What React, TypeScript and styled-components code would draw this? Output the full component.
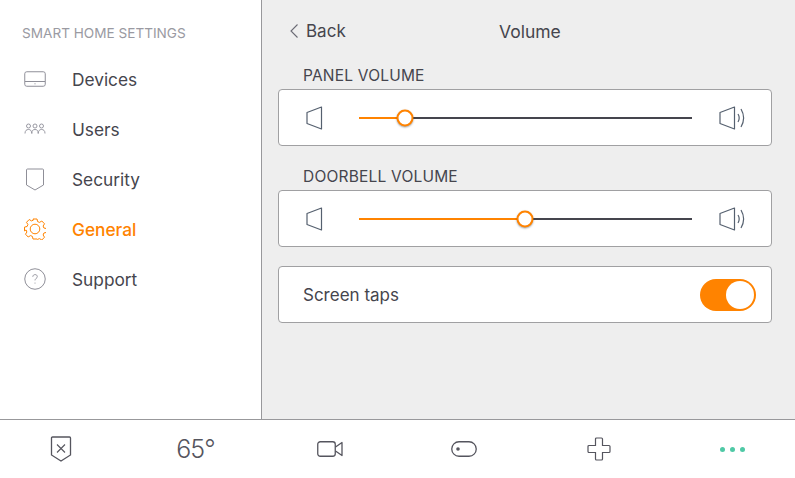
import * as React from "react";
import styled, { createGlobalStyle } from "styled-components";

const orange = "#ff8300";
const ink = "#45454d";
const iconGray = "#8f8f98";

const GlobalStyle = createGlobalStyle`
  html, body {
    margin: 0;
    padding: 0;
    background: #fff;
  }
  body {
    font-family: "Inter", "Liberation Sans", sans-serif;
    color: ${ink};
  }
`;

const navItems = [
  { label: "Devices", icon: "devices" },
  { label: "Users", icon: "users" },
  { label: "Security", icon: "security" },
  { label: "General", icon: "general", active: true },
  { label: "Support", icon: "support" },
];

const NavIcon: React.FC<{ name: string }> = ({ name }) => {
  switch (name) {
    case "devices":
      return (
        <svg width="22" height="16" viewBox="0 0 22 16" fill="none" stroke="currentColor">
          <rect x="0.75" y="0.75" width="20.5" height="14.5" rx="2" />
          <path d="M1 10.5h20" />
          <path d="M10.5 12.8h1" />
        </svg>
      );
    case "users":
      return (
        <svg width="22" height="12" viewBox="0 0 22 12" fill="none" stroke="currentColor" strokeWidth="0.9">
          <circle cx="4.5" cy="3" r="2" />
          <circle cx="11" cy="3" r="2" />
          <circle cx="17.5" cy="3" r="2" />
          <path d="M1 10.5c0-3 1.5-4 3.5-4s3 1 3.3 4M7.8 10.5c0-3 1.2-4 3.2-4s3.2 1 3.2 4M14.2 10.5c.3-3 1.3-4 3.3-4s3.5 1 3.5 4" />
        </svg>
      );
    case "security":
      return (
        <svg width="18" height="23" viewBox="0 0 18 23" fill="none" stroke="currentColor">
          <path d="M1.5 1h15a1 1 0 0 1 1 1v15l-8.500 5-8.500-5V2a1 1 0 0 1 1-1z" />
        </svg>
      );
    case "general":
      return (
        <svg width="22" height="22" viewBox="0 0 22 22" fill="none" stroke="currentColor">
          <circle cx="11" cy="11" r="4.800" />
          <path d="M9 1h4l.6 2.600 1.900.8 2.300-1.400 2.700 2.800-1.400 2.200.8 2 2.600.6v3.800l-2.600.6-.8 2 1.400 2.200-2.700 2.800-2.300-1.400-1.900.8L13 21H9l-.6-2.600-1.900-.8-2.300 1.400-2.700-2.800 1.400-2.200-.8-2L.5 12.900V9.100l2.600-.6.8-2-1.400-2.200L5.200 1.500l2.300 1.400 1.900-.8z" strokeLinejoin="round" />
        </svg>
      );
    default:
      return (
        <svg width="22" height="22" viewBox="0 0 22 22" fill="none" stroke="currentColor">
          <circle cx="11" cy="11" r="10.250" />
          <path d="M8.800 8.800c0-1.400 1-2.200 2.300-2.200s2.200.8 2.200 2c0 1.800-2.300 1.800-2.300 3.800" strokeWidth="0.9" />
          <path d="M11 14.600v1" strokeWidth="0.9" />
        </svg>
      );
  }
};

const SpeakerLow = () => (
  <svg width="17" height="24" viewBox="0 0 17 24" fill="none" stroke="currentColor" strokeWidth="1.2">
    <path d="M1 6.500L15.500 1v22L1 17.500z" strokeLinejoin="round" />
  </svg>
);

const SpeakerHigh = () => (
  <svg width="27" height="24" viewBox="0 0 27 24" fill="none" stroke="currentColor" strokeWidth="1.2">
    <path d="M1 6.500L15.500 1v22L1 17.500z" strokeLinejoin="round" />
    <path d="M19 8c1.500 2.500 1.500 5.500 0 8" />
    <path d="M22 3c3.500 6 3.500 12 0 18" />
  </svg>
);

const VolumeCard: React.FC<{ value: number }> = ({ value }) => (
  <Card>
    <SpeakerSlot>
      <SpeakerLow />
    </SpeakerSlot>
    <Track>
      <Fill style={{ width: `${value}%` }} />
      <Thumb style={{ left: `${value}%` }} />
    </Track>
    <SpeakerSlotEnd>
      <SpeakerHigh />
    </SpeakerSlotEnd>
  </Card>
);

const App: React.FC = () => {
  return (
    <>
      <GlobalStyle />
      <Screen>
        <Body>
          <Sidebar>
            <SectionTitle>SMART HOME SETTINGS</SectionTitle>
            <NavList>
              {navItems.map((item) => (
                <NavRow key={item.label} $active={item.active}>
                  <NavIconSlot>
                    <NavIcon name={item.icon} />
                  </NavIconSlot>
                  {item.label}
                </NavRow>
              ))}
            </NavList>
          </Sidebar>
          <Main>
            <TopRow>
              <BackLink>
                <svg width="10" height="16" viewBox="0 0 10 16" fill="none" stroke="#6a6a74" strokeWidth="1.100">
                  <path d="M8.500 1.500L2 8l6.500 6.500" />
                </svg>
                Back
              </BackLink>
              <PageTitle>Volume</PageTitle>
            </TopRow>
            <Groups>
              <div>
                <GroupLabel>PANEL VOLUME</GroupLabel>
                <VolumeCard value={13.8} />
              </div>
              <div>
                <GroupLabel>DOORBELL VOLUME</GroupLabel>
                <VolumeCard value={49.8} />
              </div>
              <ToggleCard>
                <ToggleLabel>Screen taps</ToggleLabel>
                <Toggle>
                  <ToggleKnob />
                </Toggle>
              </ToggleCard>
            </Groups>
          </Main>
        </Body>
        <BottomBar>
          <BarItem>
            <svg width="22" height="26" viewBox="0 0 22 26" fill="none" stroke="currentColor" strokeWidth="1.300">
              <path d="M2.500 1h17a1 1 0 0 1 1 1v17L11 25 1.500 19V2a1 1 0 0 1 1-1z" />
              <path d="M7 8.500l8 8M15 8.500l-8 8" strokeWidth="1.100" />
            </svg>
          </BarItem>
          <Temperature>65°</Temperature>
          <BarItem>
            <svg width="26" height="16" viewBox="0 0 26 16" fill="none" stroke="currentColor" strokeWidth="1.300">
              <rect x="0.750" y="0.750" width="17.500" height="14.500" rx="2.500" />
              <path d="M18.500 6l6.500-4.500v13L18.500 10" strokeLinejoin="round" />
            </svg>
          </BarItem>
          <BarItem>
            <svg width="26" height="16" viewBox="0 0 26 16" fill="none" stroke="currentColor" strokeWidth="1.300">
              <rect x="0.750" y="0.750" width="24.500" height="14.500" rx="7.250" />
              <circle cx="7" cy="8" r="1.800" fill="currentColor" stroke="none" />
            </svg>
          </BarItem>
          <BarItem>
            <svg width="24" height="24" viewBox="0 0 24 24" fill="none" stroke="currentColor" strokeWidth="1.200">
              <path d="M9.500 1h5a1 1 0 0 1 1 1v6.500H22a1 1 0 0 1 1 1v5a1 1 0 0 1-1 1h-6.500V22a1 1 0 0 1-1 1h-5a1 1 0 0 1-1-1v-6.500H2a1 1 0 0 1-1-1v-5a1 1 0 0 1 1-1h6.500V2a1 1 0 0 1 1-1z" />
            </svg>
          </BarItem>
          <BarItem>
            <Dots>
              <Dot />
              <Dot />
              <Dot />
            </Dots>
          </BarItem>
        </BottomBar>
      </Screen>
    </>
  );
};

export default App;

const Screen = styled.div`
  display: flex;
  flex-direction: column;
  width: 795px;
  height: 478px;
  overflow: hidden;
  background: #fff;
`;

const Body = styled.div`
  display: flex;
  flex: 0 0 419px;
`;

const Sidebar = styled.aside`
  width: 261px;
  padding-top: 25px;
  background: #fff;
  border-right: 1px solid #98989b;
`;

const SectionTitle = styled.div`
  margin-left: 22px;
  font-size: 13.600px;
  line-height: 16px;
  color: #9a9aa2;
`;

const NavList = styled.nav`
  display: flex;
  flex-direction: column;
  margin-top: 13px;
`;

const NavRow = styled.a<{ $active?: boolean }>`
  display: flex;
  align-items: center;
  height: 50px;
  font-size: 17.300px;
  font-weight: ${(p) => (p.$active ? 500 : 400)};
  color: ${(p) => (p.$active ? orange : ink)};
  svg {
    color: ${(p) => (p.$active ? orange : iconGray)};
  }
`;

const NavIconSlot = styled.span`
  display: flex;
  justify-content: center;
  width: 22px;
  margin: 0 26px 0 24px;
`;

const Main = styled.main`
  flex: 1;
  padding: 0 23px 0 16px;
  background: #eee;
`;

const TopRow = styled.div`
  position: relative;
  display: flex;
  align-items: center;
  height: 62px;
`;

const BackLink = styled.a`
  display: flex;
  align-items: center;
  gap: 7px;
  margin-left: 11px;
  font-size: 17px;
`;

const PageTitle = styled.h1`
  position: absolute;
  left: 221px;
  margin: 0;
  font-size: 17.500px;
  font-weight: 400;
`;

const Groups = styled.div`
  display: flex;
  flex-direction: column;
  gap: 17px;
`;

const GroupLabel = styled.div`
  margin-left: 25px;
  font-size: 15.500px;
  letter-spacing: 0.2px;
  line-height: 27px;
  color: ${ink};
`;

const Card = styled.div`
  display: flex;
  align-items: center;
  box-sizing: border-box;
  height: 57px;
  padding: 0 25px 0 27px;
  background: #fff;
  border: 1px solid #a0a0a2;
  border-radius: 4px;
`;

const SpeakerSlot = styled.span`
  display: flex;
  width: 17px;
  color: #55606f;
`;

const SpeakerSlotEnd = styled(SpeakerSlot)`
  justify-content: flex-end;
  width: 27px;
`;

const Track = styled.div`
  position: relative;
  flex: 1;
  height: 2px;
  margin: 0 27px 0 36px;
  background: #45454d;
`;

const Fill = styled.div`
  height: 100%;
  background: ${orange};
`;

const Thumb = styled.span`
  position: absolute;
  top: 50%;
  box-sizing: border-box;
  width: 17px;
  height: 17px;
  background: #fff;
  border: 2px solid ${orange};
  border-radius: 50%;
  box-shadow: 0 1px 2px rgba(0, 0, 0, 0.35);
  transform: translate(-50%, -50%);
`;

const ToggleCard = styled(Card)`
  justify-content: space-between;
  margin-top: 2px;
  padding: 0 15px 0 24px;
`;

const ToggleLabel = styled.span`
  font-size: 17px;
`;

const Toggle = styled.span`
  display: flex;
  justify-content: flex-end;
  align-items: center;
  box-sizing: border-box;
  width: 56px;
  height: 32px;
  padding: 2px;
  background: ${orange};
  border-radius: 16px;
`;

const ToggleKnob = styled.span`
  width: 28px;
  height: 28px;
  background: #fff;
  border-radius: 50%;
`;

const BottomBar = styled.footer`
  display: flex;
  flex: 1;
  justify-content: space-between;
  align-items: center;
  padding: 0 42px 0 41px;
  background: #fff;
  border-top: 1px solid #98989b;
`;

const BarItem = styled.div`
  display: flex;
  justify-content: center;
  align-items: center;
  width: 40px;
  color: #55555e;
`;

const Temperature = styled(BarItem)`
  font-size: 25px;
  font-weight: 300;
  letter-spacing: -1px;
`;

const Dots = styled.div`
  display: flex;
  gap: 5px;
`;

const Dot = styled.span`
  width: 5px;
  height: 5px;
  background: #4fc9a6;
  border-radius: 50%;
`;
